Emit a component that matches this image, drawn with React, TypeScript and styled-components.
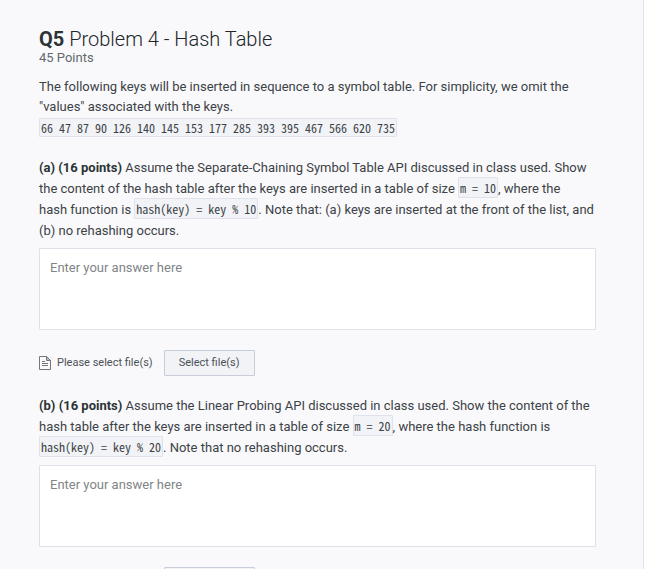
import React, { useId } from "react";
import styled, { createGlobalStyle } from "styled-components";

const GlobalStyle = createGlobalStyle`
  *, *::before, *::after { box-sizing: border-box; }
  body {
    margin: 0;
    background: #ffffff;
    color: #3c4245;
    font-family: Roboto, "Liberation Sans", sans-serif;
    font-size: 13px;
    line-height: 20px;
  }
`;

const Viewport = styled.div`
  height: 100vh;
  overflow: hidden;
`;

const Panel = styled.main`
  min-height: 100%;
  margin-right: 21px;
  padding: 27px 47px 0 39px;
  background: #f9f9fc;
  border-right: 1px solid #dfe1e9;
`;

const Strong = styled.strong`
  color: #2c3335;
  font-weight: 700;
`;

const Title = styled.h1`
  margin: 0;
  color: #202628;
  font-size: 20px;
  font-weight: 300;
  line-height: 24px;
`;

const Points = styled.div`
  color: #63686c;
  line-height: 14px;
`;

const Intro = styled.div`
  margin: 12px 0 20px;
`;

const Code = styled.code`
  padding: 1px;
  background: #f1f3f7;
  border: 1px solid #dfe2ea;
  border-radius: 1px;
  color: #3c4245;
  font-family: "Noto Sans CJK SC", "Liberation Mono", monospace;
  font-feature-settings: "hwid";
  font-size: 12px;
  line-height: 15px;
`;

const KeyList = styled(Code)`
  display: block;
  width: fit-content;
  margin-top: 1px;
`;

const Question = styled.section`
  margin-bottom: 19px;
`;

const Prompt = styled.label`
  display: block;
  line-height: 21px;
`;

const Answer = styled.textarea`
  display: block;
  width: 100%;
  height: 82px;
  margin-top: 7px;
  padding: 9px 10px;
  background: #ffffff;
  border: 1px solid #dfe1e9;
  border-radius: 1px;
  color: inherit;
  font: inherit;
  resize: none;

  &::placeholder {
    color: #808587;
    opacity: 1;
  }
`;

const FileRow = styled.div`
  display: flex;
  align-items: center;
  margin-top: 20px;
  color: #4c5156;
  font-size: 11px;
`;

const FileIcon = styled.svg`
  width: 12px;
  height: 14px;
  margin-right: 6px;
`;

const SelectButton = styled.button`
  height: 26px;
  margin-left: 11px;
  padding: 0 14px;
  background: #f1f3f7;
  border: 1px solid #c8ced9;
  border-radius: 1px;
  color: inherit;
  font: inherit;
  cursor: pointer;
`;

function QuestionPart({ children }: { children: React.ReactNode }) {
  const id = useId();
  return (
    <Question>
      <Prompt htmlFor={id}>{children}</Prompt>
      <Answer id={id} placeholder="Enter your answer here" />
      <FileRow>
        <FileIcon viewBox="0 0 12 14" fill="none" stroke="#72777a" aria-hidden="true">
          <path d="M.5.5h7l4 4v9H.5z" />
          <path d="M7.5.5v4h4z" fill="#b9bdc0" />
          <path d="M3 5.5h3M3 7.5h6M3 9.5h6" />
        </FileIcon>
        <span>Please select file(s)</span>
        <SelectButton type="button">Select file(s)</SelectButton>
      </FileRow>
    </Question>
  );
}

export default function App() {
  return (
    <>
      <GlobalStyle />
      <Viewport>
        <Panel>
          <Title>
            <Strong>Q5</Strong> Problem 4 - Hash Table
          </Title>
          <Points>45 Points</Points>
          <Intro>
            The following keys will be inserted in sequence to a symbol table. For simplicity, we omit the
            "values" associated with the keys.
            <KeyList>66 47 87 90 126 140 145 153 177 285 393 395 467 566 620 735</KeyList>
          </Intro>
          <QuestionPart>
            <Strong>(a) (16 points)</Strong> Assume the Separate-Chaining Symbol Table API discussed in class
            used. Show the content of the hash table after the keys are inserted in a table of size{" "}
            <Code>m = 10</Code>, where the
            <br />
            hash function is <Code>hash(key) = key % 10</Code>. Note that: (a) keys are inserted at the front
            of the list, and
            <br />
            (b) no rehashing occurs.
          </QuestionPart>
          <QuestionPart>
            <Strong>(b) (16 points)</Strong> Assume the Linear Probing API discussed in class used. Show the
            content of the hash table after the keys are inserted in a table of size <Code>m = 20</Code>,
            where the hash function is <Code>hash(key) = key % 20</Code>. Note that no rehashing occurs.
          </QuestionPart>
        </Panel>
      </Viewport>
    </>
  );
}
